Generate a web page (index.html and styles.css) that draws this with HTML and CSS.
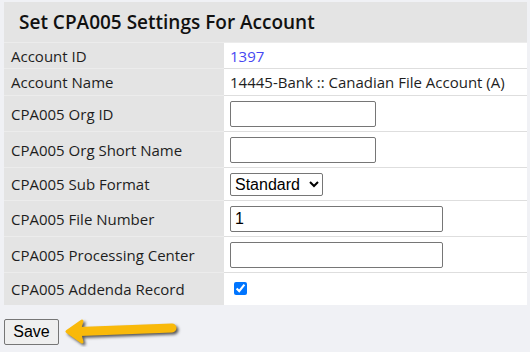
FILE: index.html
```html
<!DOCTYPE html>
<html lang="en">
<head>
    <meta charset="UTF-8">
    <title>Set CPA005 Settings For Account</title>
    <link rel="stylesheet" href="styles.css">
</head>
<body>
    <form class="panel">
        <h2 class="panel-title">Set CPA005 Settings For Account</h2>

        <div class="field-row row-text">
            <div class="field-label">Account ID</div>
            <div class="field-value"><a class="link" href="#">1397</a></div>
        </div>
        <div class="field-row row-text row-tall">
            <div class="field-label">Account Name</div>
            <div class="field-value">14445-Bank :: Canadian File Account (A)</div>
        </div>
        <div class="field-row row-input">
            <div class="field-label">CPA005 Org ID</div>
            <div class="field-value"><input type="text" class="input-short"></div>
        </div>
        <div class="field-row row-input">
            <div class="field-label">CPA005 Org Short Name</div>
            <div class="field-value"><input type="text" class="input-short"></div>
        </div>
        <div class="field-row row-select">
            <div class="field-label">CPA005 Sub Format</div>
            <div class="field-value">
                <select class="select">
                    <option selected>Standard</option>
                    <option>Extended</option>
                </select>
            </div>
        </div>
        <div class="field-row row-input">
            <div class="field-label">CPA005 File Number</div>
            <div class="field-value"><input type="text" class="input-long" value="1"></div>
        </div>
        <div class="field-row row-input">
            <div class="field-label">CPA005 Processing Center</div>
            <div class="field-value"><input type="text" class="input-long"></div>
        </div>
        <div class="field-row row-select last">
            <div class="field-label">CPA005 Addenda Record</div>
            <div class="field-value"><input type="checkbox" class="check" checked></div>
        </div>
    </form>

    <div class="actions">
        <button type="button" class="save-btn">Save</button>
        <!-- pointer arrow -->
        <svg class="arrow" width="118" height="30" viewBox="0 0 118 30">
            <path d="M15 14.5 L108 11" stroke="#f9b90a" stroke-width="9" stroke-linecap="round" fill="none"/>
            <path d="M3 14.5 L18 4 L15 14 L18 25 Z" fill="#f9b90a" stroke="#f9b90a" stroke-width="3" stroke-linejoin="round"/>
        </svg>
    </div>
</body>
</html>
```

FILE: styles.css
```css
body {
    margin: 0;
    padding: 2px 3px 0 4px;
    background-color: #f0f1f5;
    font-family: "Open Sans", "Noto Sans", sans-serif;
    color: #1e1e1e;
}
.panel {
    margin: 0;
    background-color: #fff;
}
.panel-title {
    margin: 0;
    height: 40px;
    padding-left: 15px;
    display: flex;
    align-items: center;
    background-color: #e4e4e4;
    border-bottom: 1px solid #ececec;
    font-size: 19px;
    font-weight: 600;
    color: #111;
}
.field-row {
    display: grid;
    grid-template-columns: 220px 1fr;
    height: 26px;
}
.row-tall {
    height: 27px;
}
.row-input {
    height: 36px;
}
.row-select {
    height: 33px;
}
.last {
    height: 32px;
}
.field-label {
    display: flex;
    align-items: center;
    padding-left: 7px;
    background-color: #e4e4e4;
    border-bottom: 1px solid #ececec;
    font-size: 15px;
}
.field-value {
    display: flex;
    align-items: center;
    padding-left: 6px;
    border-bottom: 1px solid #dedede;
    font-size: 15px;
}
.last .field-label,
.last .field-value {
    border-bottom: none;
}
.link {
    color: #4747f2;
    text-decoration: none;
}
input[type="text"] {
    box-sizing: border-box;
    height: 26px;
    margin: 0;
    padding: 1px 4px;
    border: 1px solid #767676;
    border-radius: 2px;
    font-family: Arial, "Liberation Sans", sans-serif;
    font-size: 16px;
    color: #000;
    background: #fff;
}
.input-short {
    width: 146px;
}
.input-long {
    width: 213px;
}
.select {
    box-sizing: border-box;
    height: 23px;
    width: 93px;
    margin: 1px 0 0 0;
    border: 1px solid #767676;
    border-radius: 2px;
    font-family: Arial, "Liberation Sans", sans-serif;
    font-size: 16px;
    color: #000;
    background: #fff;
}
.check {
    width: 13px;
    height: 13px;
    margin: 0 0 2px 4px;
    accent-color: #0075ff;
}
.actions {
    display: flex;
    align-items: center;
    gap: 5px;
    margin-top: 11px;
}
.save-btn {
    box-sizing: border-box;
    height: 26px;
    width: 55px;
    padding: 0;
    border: 1px solid #767676;
    border-radius: 2px;
    background-color: #efefef;
    font-family: Arial, "Liberation Sans", sans-serif;
    font-size: 16px;
    color: #000;
}
.arrow {
    margin-top: 1px;
    filter: drop-shadow(2px 2px 1.5px rgba(0, 0, 0, 0.65));
}
```
